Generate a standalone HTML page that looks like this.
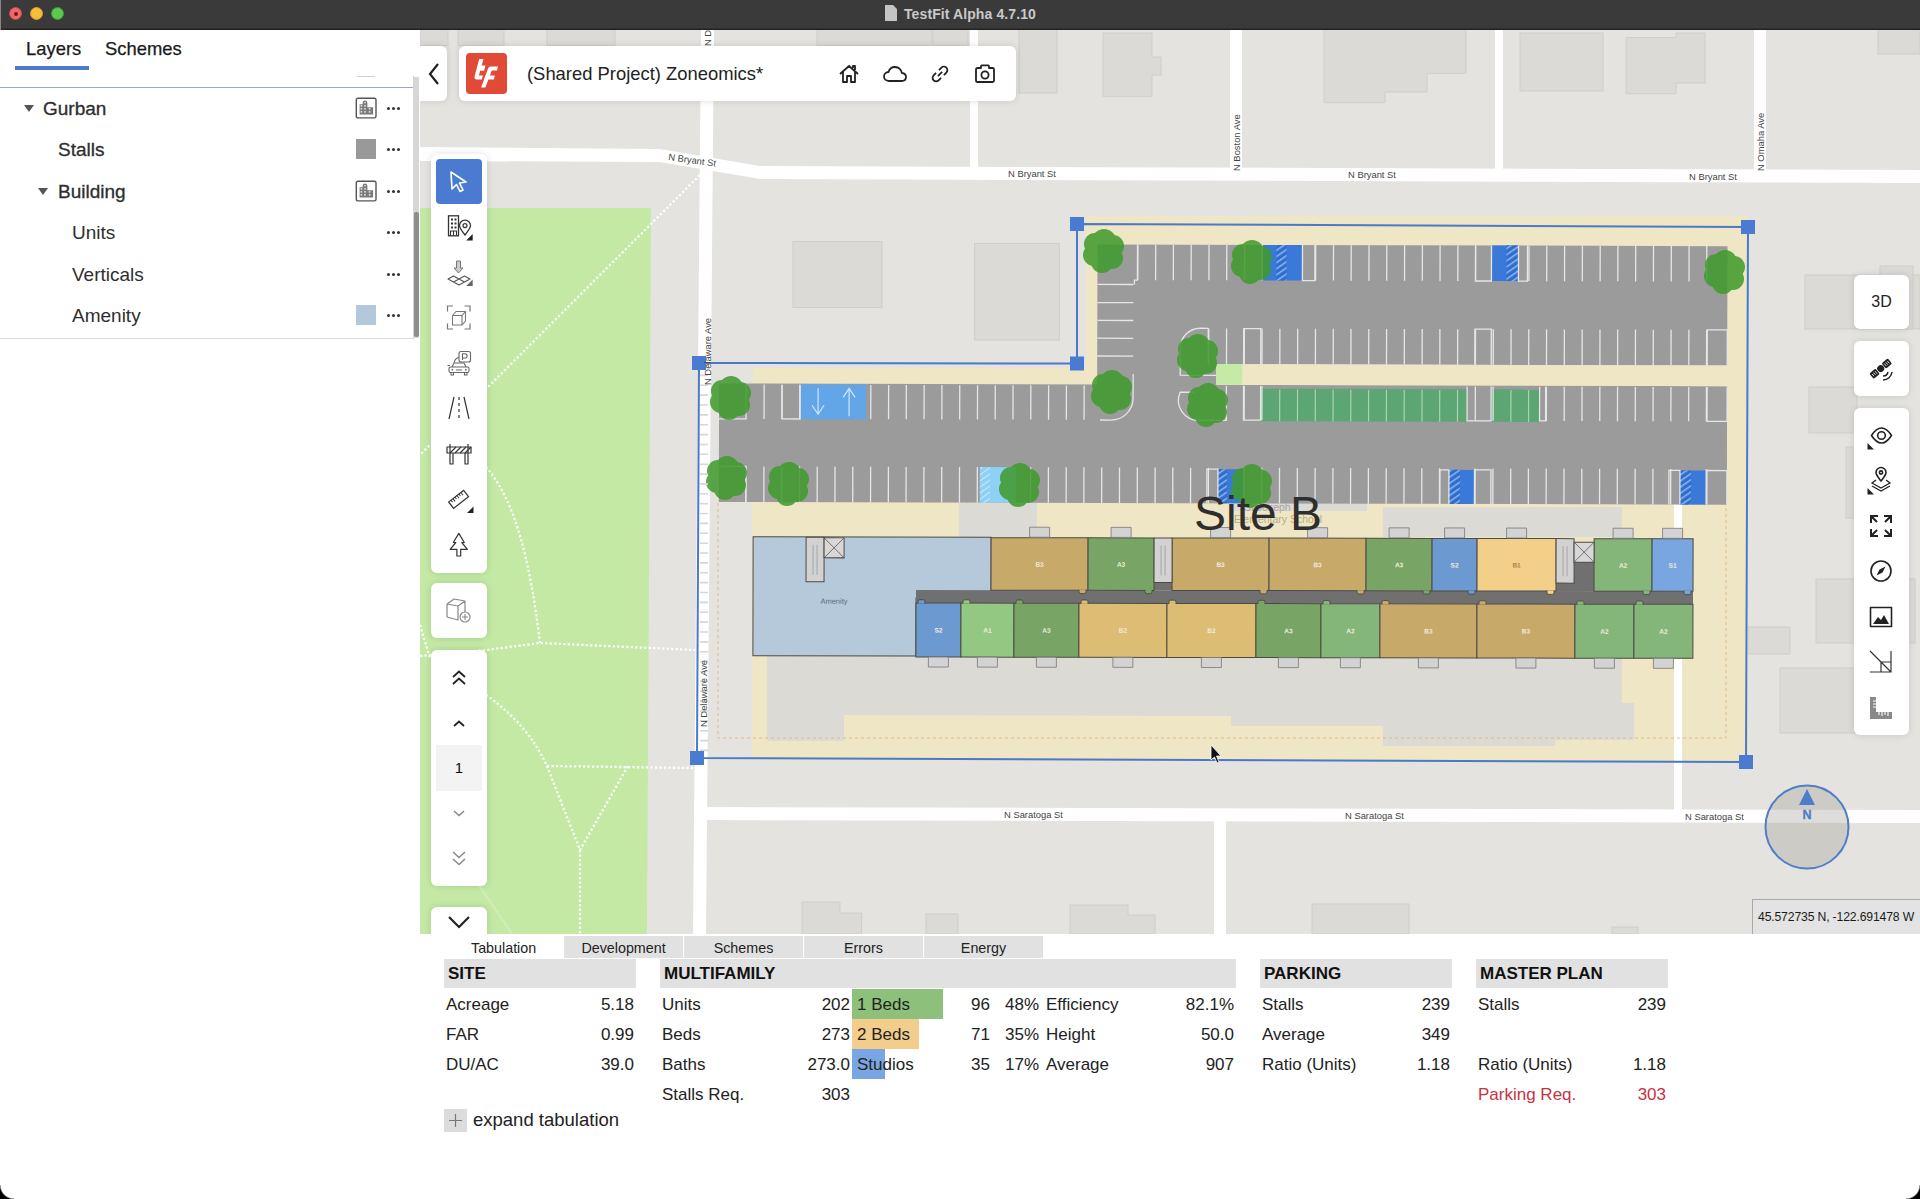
<!DOCTYPE html>
<html><head><meta charset="utf-8">
<style>
*{margin:0;padding:0;box-sizing:border-box}
html,body{width:1920px;height:1199px;overflow:hidden;background:#fff;font-family:"Liberation Sans",sans-serif;color:#222}
.abs{position:absolute}
#titlebar{left:0;top:0;width:1920px;height:29.5px;background:#3a3a3a;box-shadow:inset 0 -1.5px 0 #222;border-left:1px solid #888;z-index:5}
.tl{position:absolute;top:7px;width:13px;height:13px;border-radius:50%}
#title{left:903px;top:6px;font-size:14px;font-weight:bold;color:#c9c9c9;letter-spacing:0.1px}
#left{left:0;top:29px;width:420px;height:1170px;background:#fff}
.tab{position:absolute;top:39px;font-size:17px;color:#1a1a1a}
.dots{position:absolute;width:3px;height:3px;background:#333;border-radius:50%;box-shadow:5px 0 0 #333,10px 0 0 #333}
.tri{position:absolute;width:0;height:0;border-left:5px solid transparent;border-right:5px solid transparent;border-top:7px solid #555}
.card{position:absolute;background:#fff;border-radius:6px;box-shadow:0 0 7px rgba(0,0,0,0.13)}
</style></head><body>
<div id="titlebar" class="abs">
  <div class="tl" style="left:8px;background:#ee6a6a;border:1px solid #c74b4b"><div style="position:absolute;left:3.5px;top:3.5px;width:4px;height:4px;border-radius:50%;background:#8a1010"></div></div>
  <div class="tl" style="left:29px;background:#f6bd3b;border:1px solid #d49a2a"></div>
  <div class="tl" style="left:50px;background:#5bc94e;border:1px solid #3c9a34"></div>
  <svg class="abs" style="left:883px;top:5px" width="14" height="16" viewBox="0 0 14 16"><path d="M1 0h8l4 4v12H1z" fill="#c4c4c4"/></svg>
  <div id="title" class="abs">TestFit Alpha 4.7.10</div>
</div>
<div id="left" class="abs"></div>
<div class="abs" style="left:26px;top:38px;font-size:18.4px;color:#1a1a1a;line-height:22px;-webkit-text-stroke:0.25px #1a1a1a">Layers</div>
<div class="abs" style="left:105px;top:38px;font-size:18.4px;color:#1a1a1a;line-height:22px;-webkit-text-stroke:0.25px #1a1a1a">Schemes</div>
<div class="abs" style="left:15px;top:66px;width:74px;height:4px;background:#4f79c9"></div>
<div class="abs" style="left:357px;top:76px;width:18px;height:1px;background:#cfcfcf"></div>
<div class="abs" style="left:0;top:86.5px;width:414px;height:1.5px;background:#9ba8c8"></div><div class="abs" style="left:413px;top:76px;width:1px;height:12px;background:#b7c0d6"></div>
<div class="abs" style="left:413px;top:77px;width:6px;height:261px;background:#d6d6d6"></div>
<div class="abs" style="left:414px;top:212px;width:5px;height:125px;background:#8e8e8e;border-radius:2px"></div>
<div class="abs" style="left:0;top:338px;width:414px;height:1px;background:#d9d9d9"></div>
<div class="abs" style="left:43px;top:98px;font-size:19px;color:#2e2e2e;line-height:22px;-webkit-text-stroke:0.3px #2a2a2a">Gurban</div>
<div class="abs tri" style="left:24px;top:105px"></div>
<svg class="abs" style="left:355px;top:97px" width="22" height="22" viewBox="0 0 22 22"><rect x="1.3" y="1.2" width="19.7" height="19.7" rx="1.6" fill="#fff" stroke="#555" stroke-width="1.4"/><path d="M4.6,17.6 V7.3 H7.6 V6 A2.4,2.4 0 0 1 12.4,6 V10.2 H18.1 V17.6 Z" fill="#7a7a7a"/><path d="M5.6,8.3h1.6v1.2h-1.6zM9.2,8.3h1.6v1.2h-1.6zM5.6,11.3h1.6v1.2h-1.6zM9.2,11.3h1.6v1.2h-1.6zM13.8,11.3h1.6v1.2h-1.6zM5.6,14.3h1.6v1.2h-1.6zM9.2,14.3h1.6v1.2h-1.6zM13.8,14.3h1.6v1.2h-1.6zM9.4,5h1.2v1.2h-1.2z" fill="#fff"/></svg>
<div class="abs dots" style="left:387px;top:107px"></div>
<div class="abs" style="left:58px;top:139px;font-size:19px;color:#2e2e2e;line-height:22px;-webkit-text-stroke:0.3px #2a2a2a">Stalls</div>
<div class="abs" style="left:356px;top:139px;width:20px;height:20px;background:#999999"></div>
<div class="abs dots" style="left:387px;top:148px"></div>
<div class="abs" style="left:58px;top:181px;font-size:19px;color:#2e2e2e;line-height:22px;-webkit-text-stroke:0.3px #2a2a2a">Building</div>
<div class="abs tri" style="left:38px;top:188px"></div>
<svg class="abs" style="left:355px;top:180px" width="22" height="22" viewBox="0 0 22 22"><rect x="1.3" y="1.2" width="19.7" height="19.7" rx="1.6" fill="#fff" stroke="#555" stroke-width="1.4"/><path d="M4.6,17.6 V7.3 H7.6 V6 A2.4,2.4 0 0 1 12.4,6 V10.2 H18.1 V17.6 Z" fill="#7a7a7a"/><path d="M5.6,8.3h1.6v1.2h-1.6zM9.2,8.3h1.6v1.2h-1.6zM5.6,11.3h1.6v1.2h-1.6zM9.2,11.3h1.6v1.2h-1.6zM13.8,11.3h1.6v1.2h-1.6zM5.6,14.3h1.6v1.2h-1.6zM9.2,14.3h1.6v1.2h-1.6zM13.8,14.3h1.6v1.2h-1.6zM9.4,5h1.2v1.2h-1.2z" fill="#fff"/></svg>
<div class="abs dots" style="left:387px;top:190px"></div>
<div class="abs" style="left:72px;top:222px;font-size:19px;color:#2e2e2e;line-height:22px;">Units</div>
<div class="abs dots" style="left:387px;top:231px"></div>
<div class="abs" style="left:72px;top:264px;font-size:19px;color:#2e2e2e;line-height:22px;">Verticals</div>
<div class="abs dots" style="left:387px;top:273px"></div>
<div class="abs" style="left:72px;top:305px;font-size:19px;color:#2e2e2e;line-height:22px;">Amenity</div>
<div class="abs" style="left:356px;top:305px;width:20px;height:20px;background:#b4c8dc"></div>
<div class="abs dots" style="left:387px;top:314px"></div>
<svg class="abs" style="left:420px;top:29px" width="1500" height="905" viewBox="420 29 1500 905" font-family="Liberation Sans, sans-serif"><defs><pattern id="hatch" width="5" height="5" patternUnits="userSpaceOnUse" patternTransform="rotate(55)"><rect width="5" height="5" fill="#2f6ccc"/><line x1="0.8" y1="0" x2="0.8" y2="5" stroke="#8fbaf5" stroke-width="1.5"/></pattern>
<pattern id="hatch2" width="5" height="5" patternUnits="userSpaceOnUse" patternTransform="rotate(55)"><rect width="5" height="5" fill="#8fd0f5"/><line x1="0" y1="0" x2="0" y2="5" stroke="#e4f4ff" stroke-width="1.4"/></pattern></defs><rect x="420.0" y="29.0" width="1500.0" height="905.0" fill="#e5e3df" /><rect x="420.0" y="29.0" width="28.0" height="16.6" fill="#dcdad6" stroke="#d0cecb" stroke-width="1"/><rect x="458.0" y="29.0" width="46.0" height="16.6" fill="#dcdad6" stroke="#d0cecb" stroke-width="1"/><rect x="547.0" y="29.0" width="68.0" height="16.6" fill="#dcdad6" stroke="#d0cecb" stroke-width="1"/><rect x="817.0" y="29.0" width="115.0" height="16.6" fill="#dcdad6" stroke="#d0cecb" stroke-width="1"/><rect x="933.0" y="29.0" width="35.0" height="16.6" fill="#dcdad6" stroke="#d0cecb" stroke-width="1"/><rect x="1019.0" y="29.0" width="38.0" height="64.0" fill="#dcdad6" stroke="#d0cecb" stroke-width="1"/><rect x="793.0" y="241.5" width="89.0" height="66.1" fill="#dcdad6" stroke="#d0cecb" stroke-width="1"/><rect x="974.6" y="243.4" width="84.8" height="96.6" fill="#dcdad6" stroke="#d0cecb" stroke-width="1"/><rect x="1520.0" y="33.0" width="83.0" height="58.0" fill="#dcdad6" stroke="#d0cecb" stroke-width="1"/><rect x="1878.0" y="29.0" width="42.0" height="25.0" fill="#dcdad6" stroke="#d0cecb" stroke-width="1"/><rect x="1805.0" y="275.0" width="115.0" height="54.0" fill="#dcdad6" stroke="#d0cecb" stroke-width="1"/><rect x="1880.0" y="266.0" width="33.0" height="63.0" fill="#dcdad6" stroke="#d0cecb" stroke-width="1"/><rect x="1809.0" y="387.0" width="48.0" height="46.0" fill="#dcdad6" stroke="#d0cecb" stroke-width="1"/><rect x="1846.0" y="447.0" width="54.0" height="71.0" fill="#dcdad6" stroke="#d0cecb" stroke-width="1"/><rect x="1816.0" y="579.0" width="99.0" height="64.0" fill="#dcdad6" stroke="#d0cecb" stroke-width="1"/><rect x="1748.0" y="627.0" width="42.0" height="27.0" fill="#dcdad6" stroke="#d0cecb" stroke-width="1"/><rect x="1780.0" y="668.0" width="77.0" height="65.0" fill="#dcdad6" stroke="#d0cecb" stroke-width="1"/><rect x="926.0" y="914.0" width="32.0" height="20.0" fill="#dcdad6" stroke="#d0cecb" stroke-width="1"/><rect x="1312.0" y="904.0" width="97.0" height="30.0" fill="#dcdad6" stroke="#d0cecb" stroke-width="1"/><rect x="1612.0" y="927.0" width="26.0" height="7.0" fill="#dcdad6" stroke="#d0cecb" stroke-width="1"/><polygon points="1103.0,33.0 1152.0,33.0 1152.0,57.0 1161.0,57.0 1161.0,75.0 1152.0,75.0 1152.0,96.4 1103.0,96.4" fill="#dcdad6" stroke="#d0cecb" stroke-width="1"/><polygon points="1324.0,29.0 1466.0,29.0 1466.0,73.4 1427.0,73.4 1427.0,92.0 1385.0,92.0 1385.0,102.7 1324.0,102.7" fill="#dcdad6" stroke="#d0cecb" stroke-width="1"/><polygon points="1626.0,37.5 1676.0,37.5 1676.0,33.0 1705.0,33.0 1705.0,83.0 1676.0,83.0 1676.0,93.7 1626.0,93.7" fill="#dcdad6" stroke="#d0cecb" stroke-width="1"/><polygon points="802.0,902.0 840.0,902.0 840.0,913.0 861.6,913.0 861.6,934.0 802.0,934.0" fill="#dcdad6" stroke="#d0cecb" stroke-width="1"/><polygon points="1070.0,905.0 1128.0,905.0 1128.0,915.0 1155.0,915.0 1155.0,934.0 1070.0,934.0" fill="#dcdad6" stroke="#d0cecb" stroke-width="1"/><polygon points="420.0,208.0 651.0,208.0 647.0,934.0 420.0,934.0" fill="#c3e9a5" /><path d="M478,884 L512,934" stroke="#cfeebb" stroke-width="2"/><path d="M703,172 L420,455" stroke="#fff" stroke-width="2.3" stroke-dasharray="2.2 2.3" fill="none" stroke-linecap="butt"/><path d="M486,467 C515,500 530,560 540,643" stroke="#fff" stroke-width="2.3" stroke-dasharray="2.2 2.3" fill="none" stroke-linecap="butt"/><path d="M420,656 L486,650 L540,643 L695,650" stroke="#fff" stroke-width="2.3" stroke-dasharray="2.2 2.3" fill="none" stroke-linecap="butt"/><path d="M486,695 C515,715 535,740 547,766" stroke="#fff" stroke-width="2.3" stroke-dasharray="2.2 2.3" fill="none" stroke-linecap="butt"/><path d="M547,766 L693,768" stroke="#fff" stroke-width="2.3" stroke-dasharray="2.2 2.3" fill="none" stroke-linecap="butt"/><path d="M547,766 L580,850 L628,766" stroke="#fff" stroke-width="2.3" stroke-dasharray="2.2 2.3" fill="none" stroke-linecap="butt"/><path d="M580,850 L580,934" stroke="#fff" stroke-width="2.3" stroke-dasharray="2.2 2.3" fill="none" stroke-linecap="butt"/><path d="M420,625 L430,658" stroke="#fff" stroke-width="2.3" stroke-dasharray="2.2 2.3" fill="none" stroke-linecap="butt"/><polygon points="420.0,147.0 660.0,149.0 760.0,166.0 1920.0,170.0 1920.0,183.0 760.0,179.0 660.0,162.0 420.0,161.0" fill="#ffffff" /><polygon points="701.0,29.0 714.0,29.0 706.0,934.0 693.0,934.0" fill="#ffffff" /><rect x="970.0" y="29.0" width="8.0" height="139.0" fill="#ffffff" /><rect x="1230.0" y="29.0" width="12.0" height="141.0" fill="#ffffff" /><rect x="1495.0" y="29.0" width="8.0" height="141.0" fill="#ffffff" /><rect x="1754.0" y="29.0" width="12.0" height="143.0" fill="#ffffff" /><polygon points="700.0,807.0 1920.0,810.0 1920.0,823.0 700.0,820.0" fill="#ffffff" /><rect x="1214.0" y="820.0" width="12.0" height="114.0" fill="#ffffff" /><polygon points="1086.0,216.0 1748.0,216.0 1748.0,762.0 752.0,760.0 752.0,503.0 719.0,503.0 719.0,383.0 753.0,383.0 753.0,368.0 1086.0,368.0" fill="#efe6c5" /><rect x="959.0" y="503.0" width="78.0" height="34.0" fill="#dcdad5" /><rect x="1383.0" y="507.0" width="239.0" height="30.0" fill="#dcdad5" /><rect x="1231.0" y="503.0" width="136.0" height="8.0" fill="#dcdad5" /><text x="1244" y="511" font-size="10.5" fill="#a8a69f">St Joseph</text><polygon points="767.0,656.0 1622.0,656.0 1622.0,703.0 1634.0,703.0 1634.0,740.0 1555.0,740.0 1555.0,746.0 1383.0,746.0 1383.0,726.0 1231.0,726.0 1231.0,716.0 844.0,715.0 844.0,741.0 767.0,741.0" fill="#dcdad5" /><rect x="1674.0" y="503.0" width="8.0" height="307.0" fill="#ffffff" /><path d="M718,503 V738 H1726 V503" stroke="#e3b98a" stroke-width="1" stroke-dasharray="3 3" fill="none"/><g transform="rotate(0.15 719 440)"><rect x="1097.0" y="243.5" width="630.0" height="119.3" fill="#9b9b9b" /><rect x="719.0" y="383.5" width="1008.0" height="118.5" fill="#9b9b9b" /><rect x="1097.0" y="361.8" width="119.0" height="22.7" fill="#9b9b9b" /><rect x="1242.0" y="362.8" width="485.0" height="20.7" fill="#efe6c5" /><rect x="1216.0" y="362.8" width="26.0" height="20.7" fill="#c4eaa6" /><rect x="799.0" y="384.0" width="67.0" height="35.0" fill="#63a6e7" /><rect x="980.0" y="466.4" width="36.0" height="35.6" fill="#8fd0f5" /><rect x="1260.0" y="387.3" width="207.0" height="32.5" fill="#5ba673" /><rect x="1491.0" y="387.3" width="48.0" height="32.5" fill="#5ba673" /><rect x="1262.0" y="243.5" width="40.0" height="35.5" fill="#3b79d9" /><rect x="1276.0" y="243.5" width="10.0" height="35.5" fill="url(#hatch)" /><rect x="1491.0" y="243.5" width="27.0" height="35.5" fill="#3b79d9" /><rect x="1506.0" y="243.5" width="12.0" height="35.5" fill="url(#hatch)" /><rect x="1218.0" y="467.9" width="25.0" height="34.1" fill="#3b79d9" /><rect x="1218.0" y="467.9" width="9.0" height="34.1" fill="url(#hatch)" /><rect x="1449.0" y="467.9" width="25.0" height="34.1" fill="#3b79d9" /><rect x="1449.0" y="467.9" width="11.0" height="34.1" fill="url(#hatch)" /><rect x="1680.0" y="467.9" width="26.0" height="34.1" fill="#3b79d9" /><rect x="1680.0" y="467.9" width="11.0" height="34.1" fill="url(#hatch)" /><rect x="980.0" y="466.4" width="10.0" height="35.6" fill="url(#hatch2)" /><path d="M1279.6,388.0V419.8M1297.4,388.0V419.8M1315.2,388.0V419.8M1333.0,388.0V419.8M1350.7,388.0V419.8M1368.5,388.0V419.8M1386.3,388.0V419.8M1404.1,388.0V419.8M1421.9,388.0V419.8M1439.6,388.0V419.8M1457.4,388.0V419.8M1510.8,388.0V419.8M1528.5,388.0V419.8" stroke="#a9d3b3" stroke-width="1.2" fill="none"/><path d="M764.0,384.5V418.8M764.0,466.4V502.0M781.8,384.5V418.8M781.8,466.4V502.0M799.6,384.5V418.8M799.6,466.4V502.0M817.3,466.4V502.0M835.1,466.4V502.0M852.9,466.4V502.0M870.7,384.5V418.8M870.7,466.4V502.0M888.5,384.5V418.8M888.5,466.4V502.0M906.2,384.5V418.8M906.2,466.4V502.0M924.0,384.5V418.8M924.0,466.4V502.0M941.8,384.5V418.8M941.8,466.4V502.0M959.6,384.5V418.8M959.6,466.4V502.0M977.4,384.5V418.8M977.4,466.4V502.0M995.1,384.5V418.8M1012.9,384.5V418.8M1030.7,384.5V418.8M1030.7,466.4V502.0M1048.5,384.5V418.8M1048.5,466.4V502.0M1066.3,384.5V418.8M1066.3,466.4V502.0M1084.0,384.5V418.8M1084.0,466.4V502.0M1101.8,466.4V502.0M1119.6,466.4V502.0M1137.4,243.5V279.0M1137.4,466.4V502.0M1155.2,243.5V279.0M1155.2,466.4V502.0M1172.9,243.5V279.0M1172.9,466.4V502.0M1190.7,243.5V279.0M1190.7,466.4V502.0M1208.5,243.5V279.0M1208.5,327.2V362.8M1208.5,466.4V502.0M1226.3,243.5V279.0M1226.3,327.2V362.8M1226.3,384.5V418.8M1244.1,243.5V279.0M1244.1,327.2V362.8M1244.1,384.5V418.8M1244.1,466.4V502.0M1261.8,243.5V279.0M1261.8,327.2V362.8M1261.8,384.5V418.8M1261.8,466.4V502.0M1279.6,327.2V362.8M1279.6,466.4V502.0M1297.4,327.2V362.8M1297.4,466.4V502.0M1315.2,243.5V279.0M1315.2,327.2V362.8M1315.2,466.4V502.0M1333.0,243.5V279.0M1333.0,327.2V362.8M1333.0,466.4V502.0M1350.7,243.5V279.0M1350.7,327.2V362.8M1350.7,466.4V502.0M1368.5,243.5V279.0M1368.5,327.2V362.8M1368.5,466.4V502.0M1386.3,243.5V279.0M1386.3,327.2V362.8M1386.3,466.4V502.0M1404.1,243.5V279.0M1404.1,327.2V362.8M1404.1,466.4V502.0M1421.9,243.5V279.0M1421.9,327.2V362.8M1421.9,466.4V502.0M1439.6,243.5V279.0M1439.6,327.2V362.8M1439.6,466.4V502.0M1457.4,243.5V279.0M1457.4,327.2V362.8M1475.2,243.5V279.0M1475.2,327.2V362.8M1475.2,384.5V418.8M1475.2,466.4V502.0M1493.0,327.2V362.8M1493.0,384.5V418.8M1493.0,466.4V502.0M1510.8,327.2V362.8M1510.8,466.4V502.0M1528.5,243.5V279.0M1528.5,327.2V362.8M1528.5,466.4V502.0M1546.3,243.5V279.0M1546.3,327.2V362.8M1546.3,384.5V418.8M1546.3,466.4V502.0M1564.1,243.5V279.0M1564.1,327.2V362.8M1564.1,384.5V418.8M1564.1,466.4V502.0M1581.9,243.5V279.0M1581.9,327.2V362.8M1581.9,384.5V418.8M1581.9,466.4V502.0M1599.7,243.5V279.0M1599.7,327.2V362.8M1599.7,384.5V418.8M1599.7,466.4V502.0M1617.4,243.5V279.0M1617.4,327.2V362.8M1617.4,384.5V418.8M1617.4,466.4V502.0M1635.2,243.5V279.0M1635.2,327.2V362.8M1635.2,384.5V418.8M1635.2,466.4V502.0M1653.0,243.5V279.0M1653.0,327.2V362.8M1653.0,384.5V418.8M1653.0,466.4V502.0M1670.8,243.5V279.0M1670.8,327.2V362.8M1670.8,384.5V418.8M1670.8,466.4V502.0M1688.6,243.5V279.0M1688.6,327.2V362.8M1688.6,384.5V418.8M1706.3,243.5V279.0M1706.3,327.2V362.8M1706.3,384.5V418.8M1706.3,466.4V502.0M746,466.4V502.0M1097,283.4H1133M1097,301.6H1133M1097,319.4H1133M1097,337.2H1133M1097,355.0H1133" stroke="#e6e6e6" stroke-width="1.3" fill="none"/><path d="M1302.0,243.5V279.0H1314.4V243.5M1475.0,243.5V279.0H1491.0V243.5M1518.0,243.5V279.0H1527.0V243.5M1243.4,362.8V327.2H1260.5V362.8M1474.6,362.8V327.2H1491.0V362.8M1707.0,362.8V327.2H1727.0V362.8M1243.4,384.5V418.8H1260.5V384.5M1467.0,384.5V418.8H1491.0V384.5M1539.5,384.5V418.8H1545.5V384.5M1707.0,384.5V418.8H1727.0V384.5M782.0,384.5V418.8H800.0V384.5M746,384.5V418.8H719M719,466.4H746V502.0M1207.0,502.0V467.9H1218.0V502.0M1440.0,502.0V467.9H1449.0V502.0M1474.6,502.0V467.9H1491.0V502.0M1669.0,502.0V467.9H1680.0V502.0M1707.0,502.0V467.9H1727.0V502.0M1137,243.5V279.0H1134V283.4" stroke="#e6e6e6" stroke-width="1.3" fill="none"/><path d="M1133,373 V397 A22,22 0 0 1 1111,419 H1100" stroke="#e6e6e6" stroke-width="1.3" fill="none"/><path d="M1208,327 H1200 A20,20 0 0 0 1180,347 V374 H1216" stroke="#e6e6e6" stroke-width="1.3" fill="none"/><path d="M1208,327V362" stroke="#e6e6e6" stroke-width="1.3" fill="none"/><path d="M1194,391 H1180 A20,20 0 0 0 1200,419 H1226 V391" stroke="#e6e6e6" stroke-width="1.3" fill="none"/><path d="M818,388V414M812,405L818,414L824,405M849,416V388M843,397L849,388L855,397" stroke="#cfe6ff" stroke-width="1.2" fill="none"/></g><g fill="#3f9a2c" opacity="0.86"><circle cx="1104.0" cy="241.0" r="12.0"/><circle cx="1113.0" cy="246.0" r="11.0"/><circle cx="1112.0" cy="258.0" r="11.0"/><circle cx="1102.0" cy="262.0" r="11.0"/><circle cx="1094.0" cy="255.0" r="11.0"/><circle cx="1095.0" cy="244.0" r="11.0"/><circle cx="1104.0" cy="251.0" r="13.0"/></g><g fill="#3f9a2c" opacity="0.86"><circle cx="1252.0" cy="252.0" r="12.0"/><circle cx="1261.0" cy="257.0" r="11.0"/><circle cx="1260.0" cy="269.0" r="11.0"/><circle cx="1250.0" cy="273.0" r="11.0"/><circle cx="1242.0" cy="266.0" r="11.0"/><circle cx="1243.0" cy="255.0" r="11.0"/><circle cx="1252.0" cy="262.0" r="13.0"/></g><g fill="#3f9a2c" opacity="0.86"><circle cx="1725.0" cy="262.0" r="12.0"/><circle cx="1734.0" cy="267.0" r="11.0"/><circle cx="1733.0" cy="279.0" r="11.0"/><circle cx="1723.0" cy="283.0" r="11.0"/><circle cx="1715.0" cy="276.0" r="11.0"/><circle cx="1716.0" cy="265.0" r="11.0"/><circle cx="1725.0" cy="272.0" r="13.0"/></g><g fill="#3f9a2c" opacity="0.86"><circle cx="731.0" cy="388.0" r="12.0"/><circle cx="740.0" cy="393.0" r="11.0"/><circle cx="739.0" cy="405.0" r="11.0"/><circle cx="729.0" cy="409.0" r="11.0"/><circle cx="721.0" cy="402.0" r="11.0"/><circle cx="722.0" cy="391.0" r="11.0"/><circle cx="731.0" cy="398.0" r="13.0"/></g><g fill="#3f9a2c" opacity="0.86"><circle cx="1112.0" cy="382.0" r="12.0"/><circle cx="1121.0" cy="387.0" r="11.0"/><circle cx="1120.0" cy="399.0" r="11.0"/><circle cx="1110.0" cy="403.0" r="11.0"/><circle cx="1102.0" cy="396.0" r="11.0"/><circle cx="1103.0" cy="385.0" r="11.0"/><circle cx="1112.0" cy="392.0" r="13.0"/></g><g fill="#3f9a2c" opacity="0.86"><circle cx="1198.0" cy="346.0" r="12.0"/><circle cx="1207.0" cy="351.0" r="11.0"/><circle cx="1206.0" cy="363.0" r="11.0"/><circle cx="1196.0" cy="367.0" r="11.0"/><circle cx="1188.0" cy="360.0" r="11.0"/><circle cx="1189.0" cy="349.0" r="11.0"/><circle cx="1198.0" cy="356.0" r="13.0"/></g><g fill="#3f9a2c" opacity="0.86"><circle cx="1208.0" cy="395.0" r="12.0"/><circle cx="1217.0" cy="400.0" r="11.0"/><circle cx="1216.0" cy="412.0" r="11.0"/><circle cx="1206.0" cy="416.0" r="11.0"/><circle cx="1198.0" cy="409.0" r="11.0"/><circle cx="1199.0" cy="398.0" r="11.0"/><circle cx="1208.0" cy="405.0" r="13.0"/></g><g fill="#3f9a2c" opacity="0.86"><circle cx="727.0" cy="468.0" r="12.0"/><circle cx="736.0" cy="473.0" r="11.0"/><circle cx="735.0" cy="485.0" r="11.0"/><circle cx="725.0" cy="489.0" r="11.0"/><circle cx="717.0" cy="482.0" r="11.0"/><circle cx="718.0" cy="471.0" r="11.0"/><circle cx="727.0" cy="478.0" r="13.0"/></g><g fill="#3f9a2c" opacity="0.86"><circle cx="789.0" cy="474.0" r="12.0"/><circle cx="798.0" cy="479.0" r="11.0"/><circle cx="797.0" cy="491.0" r="11.0"/><circle cx="787.0" cy="495.0" r="11.0"/><circle cx="779.0" cy="488.0" r="11.0"/><circle cx="780.0" cy="477.0" r="11.0"/><circle cx="789.0" cy="484.0" r="13.0"/></g><g fill="#3f9a2c" opacity="0.86"><circle cx="1020.0" cy="475.0" r="12.0"/><circle cx="1029.0" cy="480.0" r="11.0"/><circle cx="1028.0" cy="492.0" r="11.0"/><circle cx="1018.0" cy="496.0" r="11.0"/><circle cx="1010.0" cy="489.0" r="11.0"/><circle cx="1011.0" cy="478.0" r="11.0"/><circle cx="1020.0" cy="485.0" r="13.0"/></g><g fill="#3f9a2c" opacity="0.86"><circle cx="1252.0" cy="476.0" r="12.0"/><circle cx="1261.0" cy="481.0" r="11.0"/><circle cx="1260.0" cy="493.0" r="11.0"/><circle cx="1250.0" cy="497.0" r="11.0"/><circle cx="1242.0" cy="490.0" r="11.0"/><circle cx="1243.0" cy="479.0" r="11.0"/><circle cx="1252.0" cy="486.0" r="13.0"/></g><g transform="rotate(0.1 916 597)"><polygon points="753.0,537.0 991.0,537.0 991.0,598.0 916.0,598.0 916.0,656.0 753.0,656.0" fill="#b5c9da" stroke="#4d4a44" stroke-width="1"/><rect x="916.0" y="590.0" width="777.0" height="13.0" fill="#707070" /><rect x="1574.0" y="560.0" width="20.0" height="30.0" fill="#707070" /><rect x="1154.0" y="580.0" width="18.0" height="10.0" fill="#707070" /><rect x="1556.0" y="580.0" width="18.0" height="10.0" fill="#707070" /><rect x="991.0" y="537.5" width="97.0" height="52.5" fill="#c7a96a" stroke="#4d4a44" stroke-width="1"/><text x="1039.5" y="566.5" font-size="6.5" font-weight="bold" fill="#f1ecdc" text-anchor="middle">B3</text><rect x="1029.5" y="527.0" width="20.0" height="10.0" fill="#d3d3d3" stroke="#777" stroke-width="0.8"/><rect x="1088.0" y="537.5" width="66.0" height="52.5" fill="#78a566" stroke="#4d4a44" stroke-width="1"/><text x="1121.0" y="566.5" font-size="6.5" font-weight="bold" fill="#f1ecdc" text-anchor="middle">A3</text><rect x="1111.0" y="527.0" width="20.0" height="10.0" fill="#d3d3d3" stroke="#777" stroke-width="0.8"/><rect x="1172.0" y="537.5" width="97.0" height="52.5" fill="#c7a96a" stroke="#4d4a44" stroke-width="1"/><text x="1220.5" y="566.5" font-size="6.5" font-weight="bold" fill="#f1ecdc" text-anchor="middle">B3</text><rect x="1210.5" y="527.0" width="20.0" height="10.0" fill="#d3d3d3" stroke="#777" stroke-width="0.8"/><rect x="1269.0" y="537.5" width="97.0" height="52.5" fill="#c7a96a" stroke="#4d4a44" stroke-width="1"/><text x="1317.5" y="566.5" font-size="6.5" font-weight="bold" fill="#f1ecdc" text-anchor="middle">B3</text><rect x="1307.5" y="527.0" width="20.0" height="10.0" fill="#d3d3d3" stroke="#777" stroke-width="0.8"/><rect x="1366.0" y="537.5" width="66.0" height="52.5" fill="#78a566" stroke="#4d4a44" stroke-width="1"/><text x="1399.0" y="566.5" font-size="6.5" font-weight="bold" fill="#f1ecdc" text-anchor="middle">A3</text><rect x="1389.0" y="527.0" width="20.0" height="10.0" fill="#d3d3d3" stroke="#777" stroke-width="0.8"/><rect x="1432.0" y="537.5" width="45.0" height="52.5" fill="#6b99d0" stroke="#4d4a44" stroke-width="1"/><text x="1454.5" y="566.5" font-size="6.5" font-weight="bold" fill="#f1ecdc" text-anchor="middle">S2</text><rect x="1444.5" y="527.0" width="20.0" height="10.0" fill="#d3d3d3" stroke="#777" stroke-width="0.8"/><rect x="1477.0" y="537.5" width="79.0" height="52.5" fill="#f3d08a" stroke="#4d4a44" stroke-width="1"/><text x="1516.5" y="566.5" font-size="6.5" font-weight="bold" fill="#a8874c" text-anchor="middle">B1</text><rect x="1506.5" y="527.0" width="20.0" height="10.0" fill="#d3d3d3" stroke="#777" stroke-width="0.8"/><rect x="1594.0" y="537.5" width="58.0" height="52.5" fill="#84b579" stroke="#4d4a44" stroke-width="1"/><text x="1623.0" y="566.5" font-size="6.5" font-weight="bold" fill="#f1ecdc" text-anchor="middle">A2</text><rect x="1613.0" y="527.0" width="20.0" height="10.0" fill="#d3d3d3" stroke="#777" stroke-width="0.8"/><rect x="1652.0" y="537.5" width="41.0" height="52.5" fill="#79a6e0" stroke="#4d4a44" stroke-width="1"/><text x="1672.5" y="566.5" font-size="6.5" font-weight="bold" fill="#f1ecdc" text-anchor="middle">S1</text><rect x="1662.5" y="527.0" width="20.0" height="10.0" fill="#d3d3d3" stroke="#777" stroke-width="0.8"/><rect x="916.0" y="603.0" width="45.0" height="54.0" fill="#6b99d0" stroke="#4d4a44" stroke-width="1"/><text x="938.5" y="632.5" font-size="6.5" font-weight="bold" fill="#f1ecdc" text-anchor="middle">S2</text><rect x="928.5" y="657.0" width="20.0" height="10.0" fill="#d3d3d3" stroke="#777" stroke-width="0.8"/><rect x="961.0" y="603.0" width="53.0" height="54.0" fill="#93c882" stroke="#4d4a44" stroke-width="1"/><text x="987.5" y="632.5" font-size="6.5" font-weight="bold" fill="#f1ecdc" text-anchor="middle">A1</text><rect x="977.5" y="657.0" width="20.0" height="10.0" fill="#d3d3d3" stroke="#777" stroke-width="0.8"/><rect x="1014.0" y="603.0" width="65.0" height="54.0" fill="#78a566" stroke="#4d4a44" stroke-width="1"/><text x="1046.5" y="632.5" font-size="6.5" font-weight="bold" fill="#f1ecdc" text-anchor="middle">A3</text><rect x="1036.5" y="657.0" width="20.0" height="10.0" fill="#d3d3d3" stroke="#777" stroke-width="0.8"/><rect x="1079.0" y="603.0" width="88.0" height="54.0" fill="#dcbd73" stroke="#4d4a44" stroke-width="1"/><text x="1123.0" y="632.5" font-size="6.5" font-weight="bold" fill="#f1ecdc" text-anchor="middle">B2</text><rect x="1113.0" y="657.0" width="20.0" height="10.0" fill="#d3d3d3" stroke="#777" stroke-width="0.8"/><rect x="1167.0" y="603.0" width="89.0" height="54.0" fill="#dcbd73" stroke="#4d4a44" stroke-width="1"/><text x="1211.5" y="632.5" font-size="6.5" font-weight="bold" fill="#f1ecdc" text-anchor="middle">B2</text><rect x="1201.5" y="657.0" width="20.0" height="10.0" fill="#d3d3d3" stroke="#777" stroke-width="0.8"/><rect x="1256.0" y="603.0" width="65.0" height="54.0" fill="#78a566" stroke="#4d4a44" stroke-width="1"/><text x="1288.5" y="632.5" font-size="6.5" font-weight="bold" fill="#f1ecdc" text-anchor="middle">A3</text><rect x="1278.5" y="657.0" width="20.0" height="10.0" fill="#d3d3d3" stroke="#777" stroke-width="0.8"/><rect x="1321.0" y="603.0" width="59.0" height="54.0" fill="#84b579" stroke="#4d4a44" stroke-width="1"/><text x="1350.5" y="632.5" font-size="6.5" font-weight="bold" fill="#f1ecdc" text-anchor="middle">A2</text><rect x="1340.5" y="657.0" width="20.0" height="10.0" fill="#d3d3d3" stroke="#777" stroke-width="0.8"/><rect x="1380.0" y="603.0" width="97.0" height="54.0" fill="#c7a96a" stroke="#4d4a44" stroke-width="1"/><text x="1428.5" y="632.5" font-size="6.5" font-weight="bold" fill="#f1ecdc" text-anchor="middle">B3</text><rect x="1418.5" y="657.0" width="20.0" height="10.0" fill="#d3d3d3" stroke="#777" stroke-width="0.8"/><rect x="1477.0" y="603.0" width="98.0" height="54.0" fill="#c7a96a" stroke="#4d4a44" stroke-width="1"/><text x="1526.0" y="632.5" font-size="6.5" font-weight="bold" fill="#f1ecdc" text-anchor="middle">B3</text><rect x="1516.0" y="657.0" width="20.0" height="10.0" fill="#d3d3d3" stroke="#777" stroke-width="0.8"/><rect x="1575.0" y="603.0" width="59.0" height="54.0" fill="#84b579" stroke="#4d4a44" stroke-width="1"/><text x="1604.5" y="632.5" font-size="6.5" font-weight="bold" fill="#f1ecdc" text-anchor="middle">A2</text><rect x="1594.5" y="657.0" width="20.0" height="10.0" fill="#d3d3d3" stroke="#777" stroke-width="0.8"/><rect x="1634.0" y="603.0" width="59.0" height="54.0" fill="#84b579" stroke="#4d4a44" stroke-width="1"/><text x="1663.5" y="632.5" font-size="6.5" font-weight="bold" fill="#f1ecdc" text-anchor="middle">A2</text><rect x="1653.5" y="657.0" width="20.0" height="10.0" fill="#d3d3d3" stroke="#777" stroke-width="0.8"/><path d="M1079.0,589.5 v2 q0,1.8 1.8,1.8 h3.4 q1.8,0 1.8,-1.8 v-2" fill="#c7a96a" stroke="#4d4a44" stroke-width="0.9"/><path d="M1145.0,589.5 v2 q0,1.8 1.8,1.8 h3.4 q1.8,0 1.8,-1.8 v-2" fill="#78a566" stroke="#4d4a44" stroke-width="0.9"/><path d="M1260.0,589.5 v2 q0,1.8 1.8,1.8 h3.4 q1.8,0 1.8,-1.8 v-2" fill="#c7a96a" stroke="#4d4a44" stroke-width="0.9"/><path d="M1357.0,589.5 v2 q0,1.8 1.8,1.8 h3.4 q1.8,0 1.8,-1.8 v-2" fill="#c7a96a" stroke="#4d4a44" stroke-width="0.9"/><path d="M1423.0,589.5 v2 q0,1.8 1.8,1.8 h3.4 q1.8,0 1.8,-1.8 v-2" fill="#78a566" stroke="#4d4a44" stroke-width="0.9"/><path d="M1468.0,589.5 v2 q0,1.8 1.8,1.8 h3.4 q1.8,0 1.8,-1.8 v-2" fill="#6b99d0" stroke="#4d4a44" stroke-width="0.9"/><path d="M1547.0,589.5 v2 q0,1.8 1.8,1.8 h3.4 q1.8,0 1.8,-1.8 v-2" fill="#f3d08a" stroke="#4d4a44" stroke-width="0.9"/><path d="M1643.0,589.5 v2 q0,1.8 1.8,1.8 h3.4 q1.8,0 1.8,-1.8 v-2" fill="#84b579" stroke="#4d4a44" stroke-width="0.9"/><path d="M1684.0,589.5 v2 q0,1.8 1.8,1.8 h3.4 q1.8,0 1.8,-1.8 v-2" fill="#79a6e0" stroke="#4d4a44" stroke-width="0.9"/><path d="M918.0,603.5 v-2 q0,-1.8 1.8,-1.8 h3.4 q1.8,0 1.8,1.8 v2" fill="#6b99d0" stroke="#4d4a44" stroke-width="0.9"/><path d="M963.0,603.5 v-2 q0,-1.8 1.8,-1.8 h3.4 q1.8,0 1.8,1.8 v2" fill="#93c882" stroke="#4d4a44" stroke-width="0.9"/><path d="M1016.0,603.5 v-2 q0,-1.8 1.8,-1.8 h3.4 q1.8,0 1.8,1.8 v2" fill="#78a566" stroke="#4d4a44" stroke-width="0.9"/><path d="M1081.0,603.5 v-2 q0,-1.8 1.8,-1.8 h3.4 q1.8,0 1.8,1.8 v2" fill="#dcbd73" stroke="#4d4a44" stroke-width="0.9"/><path d="M1169.0,603.5 v-2 q0,-1.8 1.8,-1.8 h3.4 q1.8,0 1.8,1.8 v2" fill="#dcbd73" stroke="#4d4a44" stroke-width="0.9"/><path d="M1258.0,603.5 v-2 q0,-1.8 1.8,-1.8 h3.4 q1.8,0 1.8,1.8 v2" fill="#78a566" stroke="#4d4a44" stroke-width="0.9"/><path d="M1323.0,603.5 v-2 q0,-1.8 1.8,-1.8 h3.4 q1.8,0 1.8,1.8 v2" fill="#84b579" stroke="#4d4a44" stroke-width="0.9"/><path d="M1382.0,603.5 v-2 q0,-1.8 1.8,-1.8 h3.4 q1.8,0 1.8,1.8 v2" fill="#c7a96a" stroke="#4d4a44" stroke-width="0.9"/><path d="M1479.0,603.5 v-2 q0,-1.8 1.8,-1.8 h3.4 q1.8,0 1.8,1.8 v2" fill="#c7a96a" stroke="#4d4a44" stroke-width="0.9"/><path d="M1577.0,603.5 v-2 q0,-1.8 1.8,-1.8 h3.4 q1.8,0 1.8,1.8 v2" fill="#84b579" stroke="#4d4a44" stroke-width="0.9"/><path d="M1636.0,603.5 v-2 q0,-1.8 1.8,-1.8 h3.4 q1.8,0 1.8,1.8 v2" fill="#84b579" stroke="#4d4a44" stroke-width="0.9"/><rect x="806.0" y="537.5" width="18.0" height="44.5" fill="#d2d2d2" stroke="#4d4a44" stroke-width="1"/><path d="M813.0,545V575M817.0,545V575" stroke="#999" stroke-width="0.8"/><rect x="1154.0" y="537.5" width="18.0" height="44.5" fill="#d2d2d2" stroke="#4d4a44" stroke-width="1"/><path d="M1161.0,545V575M1165.0,545V575" stroke="#999" stroke-width="0.8"/><rect x="1556.0" y="537.5" width="18.0" height="44.5" fill="#d2d2d2" stroke="#4d4a44" stroke-width="1"/><path d="M1563.0,545V575M1567.0,545V575" stroke="#999" stroke-width="0.8"/><rect x="824.0" y="538.0" width="20.0" height="20.0" fill="#d8d8d8" stroke="#4d4a44" stroke-width="1"/><path d="M824,538L844,558M844,538L824,558" stroke="#555" stroke-width="0.8"/><rect x="1574.0" y="541.0" width="20.0" height="20.0" fill="#d8d8d8" stroke="#4d4a44" stroke-width="1"/><path d="M1574,541L1594,561M1594,541L1574,561" stroke="#555" stroke-width="0.8"/><text x="834" y="604" font-size="7.5" fill="#5b6b7a" text-anchor="middle">Amenity</text></g><path d="M700,365.5H708M700,375.4H708M700,385.2H708M700,395.1H708M700,405.0H708M700,414.9H708M700,424.7H708M700,434.6H708M700,444.5H708M700,454.3H708M700,464.2H708M700,474.1H708M700,483.9H708M700,493.8H708M700,503.7H708M700,513.5H708M700,523.4H708M700,533.3H708M700,543.2H708M700,553.0H708M700,562.9H708M700,572.8H708M700,582.6H708M700,592.5H708M700,602.4H708M700,612.2H708M700,622.1H708M700,632.0H708M700,641.9H708M700,651.7H708M700,661.6H708M700,671.5H708M700,681.3H708M700,691.2H708M700,701.1H708M700,711.0H708M700,720.8H708M700,730.7H708M700,740.6H708M700,750.4H708" stroke="#d6d6d6" stroke-width="1.6"/><polygon points="1077.0,224.0 1748.0,227.0 1746.0,762.0 697.0,758.0 699.0,363.0 1077.0,363.5" fill="none" stroke="#4a79c9" stroke-width="2"/><rect x="1070.0" y="217.0" width="14.0" height="14.0" fill="#4a7bd0" /><rect x="1741.0" y="220.0" width="14.0" height="14.0" fill="#4a7bd0" /><rect x="1739.0" y="755.0" width="14.0" height="14.0" fill="#4a7bd0" /><rect x="690.0" y="751.0" width="14.0" height="14.0" fill="#4a7bd0" /><rect x="692.0" y="356.0" width="14.0" height="14.0" fill="#4a7bd0" /><rect x="1070.0" y="356.5" width="14.0" height="14.0" fill="#4a7bd0" /><text x="668" y="160" font-size="9.4" fill="#444" transform="rotate(8 668 160)">N Bryant St</text><text x="1008" y="177" font-size="9.4" fill="#444">N Bryant St</text><text x="1348" y="178" font-size="9.4" fill="#444">N Bryant St</text><text x="1689" y="180" font-size="9.4" fill="#444">N Bryant St</text><text x="1004" y="818" font-size="9.4" fill="#444">N Saratoga St</text><text x="1345" y="819" font-size="9.4" fill="#444">N Saratoga St</text><text x="1685" y="820" font-size="9.4" fill="#444">N Saratoga St</text><text x="711" y="385" font-size="9.4" fill="#444" transform="rotate(-90 711 385)">N Delaware Ave</text><text x="707" y="727" font-size="9.4" fill="#444" transform="rotate(-90 707 727)">N Delaware Ave</text><text x="1240" y="171" font-size="9.4" fill="#444" transform="rotate(-90 1240 171)">N Boston Ave</text><text x="1764" y="171" font-size="9.4" fill="#444" transform="rotate(-90 1764 171)">N Omaha Ave</text><text x="711" y="46" font-size="9.4" fill="#444" transform="rotate(-90 711 46)">N D</text><text x="1234" y="522.5" font-size="10.5" fill="#b9ab80">Elementary School</text><text x="1194" y="530" font-size="48" fill="#2e2e2e">Site B</text><path d="M1211,745 L1211,760 L1214.5,757 L1217,763 L1219,762 L1216.5,756 L1221,756 Z" fill="#111" stroke="#fff" stroke-width="0.8"/></svg><div class="card abs" style="left:420px;top:46px;width:27px;height:55px;border-radius:0 6px 6px 0;clip-path:inset(-10px -10px -10px 0)"></div><svg class="abs" style="left:426px;top:62px" width="16" height="24" viewBox="0 0 16 24"><path d="M12,2 L4,12 L12,22" stroke="#222" stroke-width="2.2" fill="none"/></svg><div class="card abs" style="left:459px;top:46px;width:557px;height:55px"></div><div class="abs" style="left:466px;top:53px;width:41px;height:41px;background:#e14a36;border-radius:4px"></div><svg class="abs" style="left:466px;top:53px" width="41" height="41" viewBox="0 0 41 41"><g fill="#fff"><path d="M13.2,5.9 L17.5,5.9 L15.6,12.6 L19.5,12.6 L18.1,17.8 L14.15,17.8 L12.85,22.5 L16.9,22.5 L15.8,26.5 L11,26.5 Q8,26.5 8.6,23.2 Z"/><path d="M15.1,34.5 L19.4,34.5 L25.8,17.6 L31.0,17.6 L32.0,13.5 L24.2,13.5 Q22.4,13.5 21.8,16.2 Z"/><path d="M19.5,22.5 L28.9,22.5 L27.9,26.5 L18.1,26.5 Z"/></g></svg><div class="abs" style="left:527px;top:63px;font-size:18.4px;color:#222;line-height:22px">(Shared Project) Zoneomics*</div><svg class="abs" style="left:838px;top:63px" width="22" height="22" viewBox="0 0 22 22"><path d="M2,11 L11,3 L20,11 M5,9 V19 H9 V13 H13 V19 H17 V9 M15,5 V3 H17 V7" stroke="#222" stroke-width="1.8" fill="none" stroke-linejoin="round"/></svg><svg class="abs" style="left:882px;top:63px" width="26" height="22" viewBox="0 0 26 22"><path d="M7,18 C3.5,18 2,15.5 2,13.5 C2,11 4,9 6.5,9 C7.5,5.5 10,4 13,4 C17,4 19.5,7 19.8,10 C22.5,10.2 24,12 24,14 C24,16.5 22,18 19.5,18 Z" stroke="#222" stroke-width="1.8" fill="none" stroke-linejoin="round"/></svg><svg class="abs" style="left:929px;top:63px" width="22" height="22" viewBox="0 0 22 22"><g transform="rotate(-45 11 11)"><path d="M9,7.5 H5.5 A3.5,3.5 0 0 0 5.5,14.5 H9 M13,7.5 H16.5 A3.5,3.5 0 0 1 16.5,14.5 H13 M8,11 H14" stroke="#222" stroke-width="1.8" fill="none" stroke-linejoin="round"/></g></svg><svg class="abs" style="left:973px;top:63px" width="24" height="22" viewBox="0 0 24 22"><path d="M4.5,5 H8 V3.2 Q8,2.4 8.8,2.4 H15.2 Q16,2.4 16,3.2 V5 H19.5 Q21,5 21,6.5 V17.5 Q21,19 19.5,19 H4.5 Q3,19 3,17.5 V6.5 Q3,5 4.5,5 Z" stroke="#222" stroke-width="1.8" fill="none" stroke-linejoin="round"/><circle cx="12" cy="12" r="3.6" stroke="#222" stroke-width="1.8" fill="none" stroke-linejoin="round"/></svg><div class="card abs" style="left:431px;top:154px;width:56px;height:419px"></div><div class="abs" style="left:436px;top:159px;width:46px;height:45px;background:#4a7bd0;border-radius:4px"></div><svg class="abs" style="left:447px;top:169px" width="24" height="26" viewBox="0 0 24 26"><path d="M4,3 L19,13 L12.5,14 L16,21 L13,22.5 L9.5,15.5 L5,20 Z" stroke="#fff" stroke-width="1.6" fill="none" stroke-linejoin="round"/></svg><svg class="abs" style="left:445px;top:214px" width="30" height="30" viewBox="0 0 30 30"><rect x="3.5" y="1.8" width="10" height="20" stroke="#333" stroke-width="1.3" fill="none"/><path d="M6,4.5h2v2h-2zM9.5,4.5h2v2h-2zM6,8.5h2v2h-2zM9.5,8.5h2v2h-2zM6,12.5h2v2h-2zM9.5,12.5h2v2h-2z" fill="#333"/><path d="M5.5,21.5V17H11.5V21.5M8.5,17V21.5" stroke="#333" stroke-width="1.1" fill="none"/><path d="M20,21 C16.3,16.5 14.5,14.2 14.5,11.6 A5.5,5.5 0 0 1 25.5,11.6 C25.5,14.2 23.7,16.5 20,21 Z" fill="#fff" stroke="#333" stroke-width="1.3"/><circle cx="20" cy="11.6" r="2" fill="none" stroke="#333" stroke-width="1.2"/><path d="M27.7,20 L27.7,26.5 L21.2,26.5 Z" fill="#222"/></svg><svg class="abs" style="left:445px;top:258px" width="30" height="30" viewBox="0 0 30 30"><path d="M11.5,3 H15.5 V10 H18 L13.5,15 L9,10 H11.5 Z" fill="#ccc" stroke="#777" stroke-width="1"/><path d="M3,21 L8.5,18 L14,21 L8.5,24 Z M14,21 L19.5,18 L25,21 L19.5,24 Z M8.5,24 L14,21 L19.5,24 L14,27 Z" stroke="#555" stroke-width="1.1" fill="none" stroke-linejoin="round"/><path d="M27.7,21.5 L27.7,28 L21.2,28 Z" fill="#666"/></svg><svg class="abs" style="left:445px;top:303px" width="28" height="28" viewBox="0 0 28 28"><path d="M2.5,8.5 V3 H8 M19.5,3 H25 V8.5 M25,20.5 V26 H19.5 M8,26 H2.5 V20.5" stroke="#777" stroke-width="1.2" fill="none"/><path d="M7.5,12.5 H17 V22 H7.5 Z M7.5,12.5 L11,8.5 H20.5 L17,12.5 M20.5,8.5 V18 L17,22" stroke="#777" stroke-width="1.1" fill="none" stroke-linejoin="round"/></svg><svg class="abs" style="left:444px;top:348px" width="30" height="30" viewBox="0 0 30 30"><rect x="15" y="3.5" width="11.5" height="10.5" rx="2" stroke="#666" stroke-width="1.1" fill="none"/><path d="M18.5,12 V5.8 H21 A2.1,2.1 0 0 1 21,10 H18.5" stroke="#666" stroke-width="1.1" fill="none"/><path d="M8,19 L10,15 H20 L22,19 M7,24.5V27H9.5V24.5 M20.5,24.5V27H23V24.5 M12,22H18 M6,17.5 H3.5 M10,15 Q11,10 15,9.5" stroke="#666" stroke-width="1.1" fill="none"/><rect x="5" y="19" width="20" height="5.5" rx="1.5" stroke="#666" stroke-width="1.1" fill="none"/><circle cx="8.3" cy="21.7" r="0.9" fill="#666"/><circle cx="21.7" cy="21.7" r="0.9" fill="#666"/></svg><svg class="abs" style="left:445px;top:394px" width="28" height="28" viewBox="0 0 28 28"><path d="M9,3 L4,25 M19,3 L24,25" stroke="#333" stroke-width="1.2" fill="none" stroke-linejoin="round"/><path d="M14,3 V25" stroke="#333" stroke-width="1.2" stroke-dasharray="3 3"/></svg><svg class="abs" style="left:445px;top:439px" width="28" height="28" viewBox="0 0 28 28"><path d="M5,5 V25 H8 V14 M20,14 V25 H23 V5" stroke="#333" stroke-width="1.2" fill="none" stroke-linejoin="round"/><rect x="2" y="8" width="24" height="6" stroke="#333" stroke-width="1.2" fill="none" stroke-linejoin="round"/><path d="M5,14 L11,8 M10,14 L16,8 M15,14 L21,8 M20,14 L26,8" stroke="#333" stroke-width="1.2"/></svg><svg class="abs" style="left:444px;top:485px" width="30" height="30" viewBox="0 0 30 30"><g transform="rotate(-38 15 14)"><rect x="5" y="10" width="19" height="8" stroke="#333" stroke-width="1.2" fill="none"/><path d="M8,10v2.5M10.5,10v3.5M13,10v2.5M15.5,10v3.5M18,10v2.5M20.5,10v3.5" stroke="#333" stroke-width="1"/></g><path d="M29.5,21.5 L29.5,28 L23,28 Z" fill="#222"/></svg><svg class="abs" style="left:446px;top:531px" width="26" height="28" viewBox="0 0 26 28"><path d="M12.8,2.4 L18.3,11.5 H15.8 L21.4,18.4 H14.7 V25 H10.9 V18.4 H4.2 L9.8,11.5 H7.3 Z" stroke="#333" stroke-width="1.2" fill="none" stroke-linejoin="round"/></svg><div class="card abs" style="left:431px;top:583px;width:56px;height:55px"></div><svg class="abs" style="left:444px;top:596px" width="30" height="30" viewBox="0 0 30 30"><path d="M3,8 L10,3 L21,5 L21,17 M3,8 L14,10 L21,5 M3,8 V21 L14,24 V10" stroke="#888" stroke-width="1.2" fill="none" stroke-linejoin="round"/><circle cx="21" cy="21" r="5" fill="#fff" stroke="#888" stroke-width="1.2" fill="none" stroke-linejoin="round"/><path d="M21,18V24M18,21H24" stroke="#888" stroke-width="1.1"/></svg><div class="card abs" style="left:431px;top:650px;width:56px;height:236px"></div><div class="abs" style="left:436px;top:745px;width:46px;height:46px;background:#f3f3f3"></div><svg class="abs" style="left:449px;top:668px" width="20" height="20" viewBox="0 0 20 20"><path d="M4,9 L10,3.5 L16,9 M4,16 L10,10.5 L16,16" stroke="#222" stroke-width="1.8" fill="none"/></svg><svg class="abs" style="left:449px;top:713px" width="20" height="20" viewBox="0 0 20 20"><path d="M5,13 L10,8.5 L15,13" stroke="#222" stroke-width="1.8" fill="none"/></svg><div class="abs" style="left:436px;top:759px;width:46px;text-align:center;font-size:15px;color:#111;line-height:18px">1</div><svg class="abs" style="left:449px;top:803px" width="20" height="20" viewBox="0 0 20 20"><path d="M5,8 L10,12.5 L15,8" stroke="#888" stroke-width="1.5" fill="none"/></svg><svg class="abs" style="left:449px;top:848px" width="20" height="20" viewBox="0 0 20 20"><path d="M4,4 L10,9.5 L16,4 M4,11 L10,16.5 L16,11" stroke="#888" stroke-width="1.5" fill="none"/></svg><div class="card abs" style="left:431px;top:907px;width:56px;height:40px;border-radius:6px 6px 0 0"></div><svg class="abs" style="left:446px;top:912px" width="26" height="20" viewBox="0 0 26 20"><path d="M3,5 L13,15 L23,5" stroke="#222" stroke-width="2.2" fill="none"/></svg><div class="card abs" style="left:1854px;top:275px;width:55px;height:54px"></div><div class="abs" style="left:1854px;top:292px;width:55px;text-align:center;font-size:16px;color:#222;line-height:20px">3D</div><div class="card abs" style="left:1854px;top:341px;width:55px;height:55px"></div><svg class="abs" style="left:1866px;top:355px" width="30" height="28" viewBox="0 0 30 28"><g transform="rotate(-40 15 14)"><rect x="3" y="10" width="8" height="7" rx="1.5" fill="#222"/><rect x="19" y="10" width="8" height="7" rx="1.5" fill="#222"/><circle cx="15" cy="13.5" r="3.5" fill="#222"/><path d="M5,12v3M7,12v3M9,12v3M21,12v3M23,12v3M25,12v3" stroke="#fff" stroke-width="0.8"/></g><path d="M17,21 A5,5 0 0 0 22,17 M17,25 A9,9 0 0 0 26,17" stroke="#222" stroke-width="1.5" fill="none"/></svg><div class="card abs" style="left:1854px;top:408px;width:55px;height:327px"></div><svg class="abs" style="left:1864px;top:422px" width="32" height="30" viewBox="0 0 32 30"><path d="M7.5,13.5 C11,8 14.5,6 17.5,6 C20.5,6 24,8 27.5,13.5 C24,19 20.5,21 17.5,21 C14.5,21 11,19 7.5,13.5 Z" stroke="#222" stroke-width="1.6" fill="none" stroke-linejoin="round"/><circle cx="17.5" cy="13.5" r="3.8" stroke="#222" stroke-width="1.6" fill="none" stroke-linejoin="round"/><path d="M3.5,21 L3.5,27.5 L10,27.5 Z" fill="#222"/></svg><svg class="abs" style="left:1864px;top:466px" width="32" height="30" viewBox="0 0 32 30"><path d="M17,15 C14,11 12,9 12,6.5 A5,5 0 0 1 22,6.5 C22,9 20,11 17,15 Z" stroke="#222" stroke-width="1.6" fill="none" stroke-linejoin="round"/><circle cx="17" cy="6.5" r="1.6" stroke="#222" stroke-width="1.6" fill="none" stroke-linejoin="round"/><path d="M12,14 L8,17 L17,22 L26,17 L22,14 M8,20 L17,25 L26,20" stroke="#222" stroke-width="1.3" fill="none"/><path d="M3.5,22 L3.5,28.5 L10,28.5 Z" fill="#222"/></svg><svg class="abs" style="left:1868px;top:513px" width="26" height="26" viewBox="0 0 26 26"><path d="M3,10 V3 H10 M3,3 L9,9 M16,3 H23 V10 M23,3 L17,9 M23,16 V23 H16 M23,23 L17,17 M10,23 H3 V16 M3,23 L9,17" stroke="#222" stroke-width="2" fill="none"/></svg><svg class="abs" style="left:1868px;top:558px" width="26" height="26" viewBox="0 0 26 26"><circle cx="13" cy="13" r="10" stroke="#222" stroke-width="1.6" fill="none" stroke-linejoin="round"/><path d="M17.5,8.5 L14.5,14.5 L8.5,17.5 L11.5,11.5 Z" fill="#222"/></svg><svg class="abs" style="left:1868px;top:604px" width="26" height="26" viewBox="0 0 26 26"><rect x="2.5" y="3.5" width="21" height="19" stroke="#222" stroke-width="1.6" fill="none" stroke-linejoin="round"/><path d="M5,20 L10,13 L13,16 L16,11 L21,20 Z" fill="#222"/></svg><svg class="abs" style="left:1868px;top:649px" width="26" height="26" viewBox="0 0 26 26"><path d="M2,23 H23 V2 M2,2 L23,23 M13,23 V13 H23" stroke="#333" stroke-width="1.2" fill="none"/></svg><svg class="abs" style="left:1868px;top:695px" width="26" height="26" viewBox="0 0 26 26"><path d="M2,2 H8 V17 H24 V24 H2 Z" fill="#888"/><path d="M11,17v3M14,17v4M17,17v3M20,17v4M8,6h-3M8,9h-3M8,12h-3" stroke="#fff" stroke-width="1.1"/></svg><svg class="abs" style="left:1760px;top:780px" width="95" height="95" viewBox="1760 780 95 95"><circle cx="1807" cy="827" r="41.5" fill="rgba(160,158,152,0.35)" stroke="#4f7ec6" stroke-width="2"/><path d="M1807,789 L1815,805 H1799 Z" fill="#4f7ec6"/><text x="1807" y="818.5" font-size="12.5" font-weight="bold" fill="#4f7ec6" stroke="#4f7ec6" stroke-width="0.3" text-anchor="middle" font-family="Liberation Sans, sans-serif">N</text></svg><div class="abs" style="left:1752px;top:899px;width:170px;height:36px;background:#e3e3e3;border:1px solid #a9a9a9;font-size:12.2px;color:#1a1a1a;line-height:34px;padding-left:5px;white-space:nowrap;letter-spacing:-0.15px">45.572735 N, -122.691478 W</div><div class="abs" style="left:420px;top:934px;width:1500px;height:265px;background:#fff"></div><div class="abs" style="left:471px;top:939px;font-size:14.3px;color:#222;line-height:18px">Tabulation</div><div class="abs" style="left:564px;top:936px;width:119px;height:22px;background:#e1e1e1;font-size:14.3px;color:#222;text-align:center;line-height:25px">Development</div><div class="abs" style="left:684px;top:936px;width:119px;height:22px;background:#e1e1e1;font-size:14.3px;color:#222;text-align:center;line-height:25px">Schemes</div><div class="abs" style="left:804px;top:936px;width:119px;height:22px;background:#e1e1e1;font-size:14.3px;color:#222;text-align:center;line-height:25px">Errors</div><div class="abs" style="left:924px;top:936px;width:119px;height:22px;background:#e1e1e1;font-size:14.3px;color:#222;text-align:center;line-height:25px">Energy</div><div class="abs" style="left:444px;top:959px;width:192px;height:29px;background:#e1e1e1;font-size:17px;font-weight:bold;color:#111;line-height:29px;padding-left:4px">SITE</div><div class="abs" style="left:660px;top:959px;width:576px;height:29px;background:#e1e1e1;font-size:17px;font-weight:bold;color:#111;line-height:29px;padding-left:4px">MULTIFAMILY</div><div class="abs" style="left:1260px;top:959px;width:192px;height:29px;background:#e1e1e1;font-size:17px;font-weight:bold;color:#111;line-height:29px;padding-left:4px">PARKING</div><div class="abs" style="left:1476px;top:959px;width:192px;height:29px;background:#e1e1e1;font-size:17px;font-weight:bold;color:#111;line-height:29px;padding-left:4px">MASTER PLAN</div><div class="abs" style="left:446px;top:995px;font-size:17px;color:#222;line-height:20px;white-space:nowrap">Acreage</div><div class="abs" style="left:554px;top:995px;width:80px;text-align:right;font-size:17px;color:#222;line-height:20px;white-space:nowrap">5.18</div><div class="abs" style="left:446px;top:1025px;font-size:17px;color:#222;line-height:20px;white-space:nowrap">FAR</div><div class="abs" style="left:554px;top:1025px;width:80px;text-align:right;font-size:17px;color:#222;line-height:20px;white-space:nowrap">0.99</div><div class="abs" style="left:446px;top:1055px;font-size:17px;color:#222;line-height:20px;white-space:nowrap">DU/AC</div><div class="abs" style="left:554px;top:1055px;width:80px;text-align:right;font-size:17px;color:#222;line-height:20px;white-space:nowrap">39.0</div><div class="abs" style="left:662px;top:995px;font-size:17px;color:#222;line-height:20px;white-space:nowrap">Units</div><div class="abs" style="left:770px;top:995px;width:80px;text-align:right;font-size:17px;color:#222;line-height:20px;white-space:nowrap">202</div><div class="abs" style="left:662px;top:1025px;font-size:17px;color:#222;line-height:20px;white-space:nowrap">Beds</div><div class="abs" style="left:770px;top:1025px;width:80px;text-align:right;font-size:17px;color:#222;line-height:20px;white-space:nowrap">273</div><div class="abs" style="left:662px;top:1055px;font-size:17px;color:#222;line-height:20px;white-space:nowrap">Baths</div><div class="abs" style="left:770px;top:1055px;width:80px;text-align:right;font-size:17px;color:#222;line-height:20px;white-space:nowrap">273.0</div><div class="abs" style="left:662px;top:1085px;font-size:17px;color:#222;line-height:20px;white-space:nowrap">Stalls Req.</div><div class="abs" style="left:770px;top:1085px;width:80px;text-align:right;font-size:17px;color:#222;line-height:20px;white-space:nowrap">303</div><div class="abs" style="left:852px;top:989px;width:91px;height:30px;background:#8dc17b"></div><div class="abs" style="left:852px;top:1019px;width:67px;height:30px;background:#f3cd8b"></div><div class="abs" style="left:852px;top:1049px;width:33px;height:30px;background:#79a6e3"></div><div class="abs" style="left:857px;top:995px;font-size:17px;color:#222;line-height:20px;white-space:nowrap">1 Beds</div><div class="abs" style="left:930px;top:995px;width:60px;text-align:right;font-size:17px;color:#222;line-height:20px;white-space:nowrap">96</div><div class="abs" style="left:1005px;top:995px;font-size:17px;color:#222;line-height:20px;white-space:nowrap">48%</div><div class="abs" style="left:857px;top:1025px;font-size:17px;color:#222;line-height:20px;white-space:nowrap">2 Beds</div><div class="abs" style="left:930px;top:1025px;width:60px;text-align:right;font-size:17px;color:#222;line-height:20px;white-space:nowrap">71</div><div class="abs" style="left:1005px;top:1025px;font-size:17px;color:#222;line-height:20px;white-space:nowrap">35%</div><div class="abs" style="left:857px;top:1055px;font-size:17px;color:#222;line-height:20px;white-space:nowrap">Studios</div><div class="abs" style="left:930px;top:1055px;width:60px;text-align:right;font-size:17px;color:#222;line-height:20px;white-space:nowrap">35</div><div class="abs" style="left:1005px;top:1055px;font-size:17px;color:#222;line-height:20px;white-space:nowrap">17%</div><div class="abs" style="left:1046px;top:995px;font-size:17px;color:#222;line-height:20px;white-space:nowrap">Efficiency</div><div class="abs" style="left:1154px;top:995px;width:80px;text-align:right;font-size:17px;color:#222;line-height:20px;white-space:nowrap">82.1%</div><div class="abs" style="left:1046px;top:1025px;font-size:17px;color:#222;line-height:20px;white-space:nowrap">Height</div><div class="abs" style="left:1154px;top:1025px;width:80px;text-align:right;font-size:17px;color:#222;line-height:20px;white-space:nowrap">50.0</div><div class="abs" style="left:1046px;top:1055px;font-size:17px;color:#222;line-height:20px;white-space:nowrap">Average</div><div class="abs" style="left:1154px;top:1055px;width:80px;text-align:right;font-size:17px;color:#222;line-height:20px;white-space:nowrap">907</div><div class="abs" style="left:1262px;top:995px;font-size:17px;color:#222;line-height:20px;white-space:nowrap">Stalls</div><div class="abs" style="left:1370px;top:995px;width:80px;text-align:right;font-size:17px;color:#222;line-height:20px;white-space:nowrap">239</div><div class="abs" style="left:1262px;top:1025px;font-size:17px;color:#222;line-height:20px;white-space:nowrap">Average</div><div class="abs" style="left:1370px;top:1025px;width:80px;text-align:right;font-size:17px;color:#222;line-height:20px;white-space:nowrap">349</div><div class="abs" style="left:1262px;top:1055px;font-size:17px;color:#222;line-height:20px;white-space:nowrap">Ratio (Units)</div><div class="abs" style="left:1370px;top:1055px;width:80px;text-align:right;font-size:17px;color:#222;line-height:20px;white-space:nowrap">1.18</div><div class="abs" style="left:1478px;top:995px;font-size:17px;color:#222;line-height:20px;white-space:nowrap">Stalls</div><div class="abs" style="left:1586px;top:995px;width:80px;text-align:right;font-size:17px;color:#222;line-height:20px;white-space:nowrap">239</div><div class="abs" style="left:1478px;top:1055px;font-size:17px;color:#222;line-height:20px;white-space:nowrap">Ratio (Units)</div><div class="abs" style="left:1586px;top:1055px;width:80px;text-align:right;font-size:17px;color:#222;line-height:20px;white-space:nowrap">1.18</div><div class="abs" style="left:1478px;top:1085px;font-size:17px;color:#c8313f;line-height:20px;white-space:nowrap">Parking Req.</div><div class="abs" style="left:1586px;top:1085px;width:80px;text-align:right;font-size:17px;color:#c8313f;line-height:20px;white-space:nowrap">303</div><div class="abs" style="left:444px;top:1109px;width:23px;height:23px;background:#dcdcdc"></div><svg class="abs" style="left:444px;top:1109px" width="23" height="23" viewBox="0 0 23 23"><path d="M11.5,5V18M5,11.5H18" stroke="#777" stroke-width="1.2"/></svg><div class="abs" style="left:473px;top:1109px;font-size:18.5px;color:#222;line-height:22px">expand tabulation</div><div class="abs" style="left:0;top:1185px;width:14px;height:14px;background:radial-gradient(circle at 14px 0, rgba(0,0,0,0) 13px, #000 14.6px)"></div><div class="abs" style="left:1906px;top:1185px;width:14px;height:14px;background:radial-gradient(circle at 0 0, rgba(0,0,0,0) 13px, #000 14.6px)"></div>
</body></html>
